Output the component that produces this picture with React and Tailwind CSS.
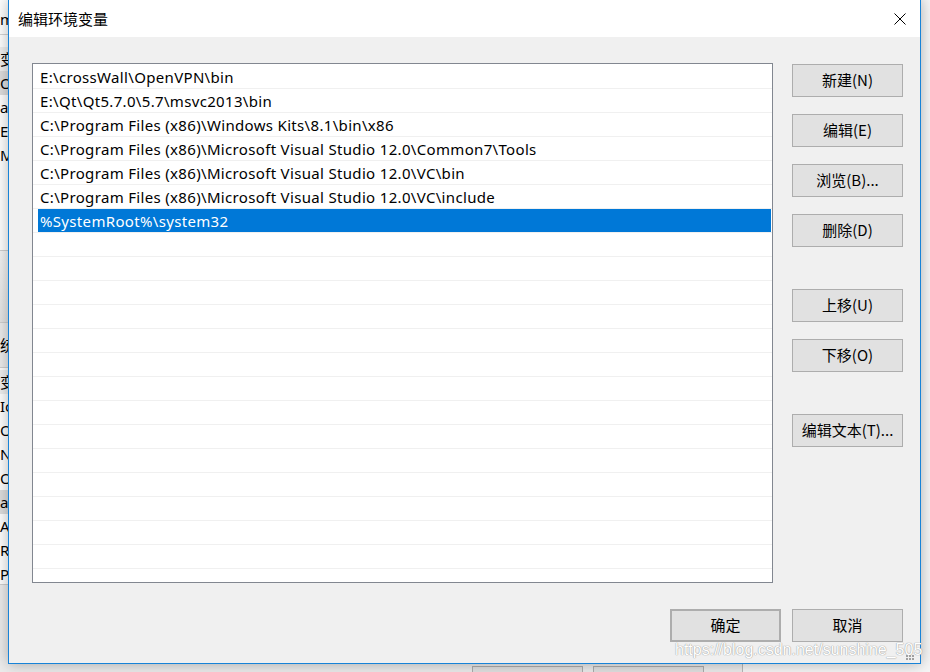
import React from "react";

const paths = [
  "E:\\crossWall\\OpenVPN\\bin",
  "E:\\Qt\\Qt5.7.0\\5.7\\msvc2013\\bin",
  "C:\\Program Files (x86)\\Windows Kits\\8.1\\bin\\x86",
  "C:\\Program Files (x86)\\Microsoft Visual Studio 12.0\\Common7\\Tools",
  "C:\\Program Files (x86)\\Microsoft Visual Studio 12.0\\VC\\bin",
  "C:\\Program Files (x86)\\Microsoft Visual Studio 12.0\\VC\\include",
  "%SystemRoot%\\system32",
];

function Btn({ children, className = "" }) {
  return (
    <div
      className={
        "w-[111px] h-[33px] flex items-center justify-center border border-[#adadad] bg-[#e1e1e1] text-[15px] text-black " +
        className
      }
    >
      {children}
    </div>
  );
}

function Frag({ t, bg = "" }) {
  return (
    <div className={"h-[24px] flex items-center text-[15px] leading-none pl-[0px] text-black overflow-hidden whitespace-nowrap " + bg}>
      {t}
    </div>
  );
}

export default function App() {
  const rows = [];
  for (let i = 0; i < 22; i++) rows.push(paths[i] || "");
  return (
    <div className="relative w-[930px] h-[672px] overflow-hidden bg-[#f6f6f6] font-['Noto_Sans','Noto_Sans_CJK_SC',sans-serif]">
      {/* background window */}
      <div className="absolute left-0 top-0 w-[743px] h-[672px] bg-[#f0f0f0] border-r border-[#b9b9b9] flex flex-col">
        <div className="h-[35px] bg-white border-b border-[#d5d5d5] flex items-center text-[15px] pt-[4px] whitespace-nowrap">
          m
        </div>
        <div className="bg-white pt-[12px] h-[215px]">
          <Frag t="变" bg="bg-[#f0f0f0]" />
          <Frag t="Or" bg="bg-[#dedede]" />
          <Frag t="a" />
          <Frag t="E" />
          <Frag t="M" />
        </div>
        <div className="h-[72px] border-t border-[#cfcfcf] bg-gradient-to-b from-[#f4f4f4] to-[#e4e4e4]"></div>
        <div className="h-[46px] border-t border-b border-[#cfcfcf] bg-[#ececec] flex items-center text-[15px]">统</div>
        <div className="bg-white pt-[2px] h-[217px] border-b border-[#cfcfcf]">
          <Frag t="变" bg="bg-[#f0f0f0]" />
          <Frag t="Ic" />
          <Frag t="Or" />
          <Frag t="NU" />
          <Frag t="OS" />
          <Frag t="a" bg="bg-[#dedede]" />
          <Frag t="A" />
          <Frag t="R" />
          <Frag t="P" />
        </div>
        <div className="flex-1 bg-[#ececec] relative">
          <div className="absolute left-[472px] top-[81px] w-[111px] h-[20px] border border-[#adadad] bg-[#e1e1e1]"></div>
          <div className="absolute left-[593px] top-[81px] w-[111px] h-[20px] border border-[#adadad] bg-[#e1e1e1]"></div>
        </div>
      </div>

      {/* dialog window */}
      <div className="absolute left-[8px] top-[-1px] w-[913px] h-[665px] border border-[#1883d7] bg-[#f0f0f0] shadow-[0_0_14px_rgba(0,0,0,0.3)] flex flex-col">
        <div className="h-[37px] bg-white flex items-center justify-between pl-[9px] pr-[14px] shrink-0">
          <span className="text-[15px] text-black font-['Noto_Sans_CJK_SC',sans-serif] pt-[2px]">编辑环境变量</span>
          <svg width="12" height="12" viewBox="0 0 12 12" className="mt-[1px]">
            <path d="M0.5 0.5 L11.5 11.5 M11.5 0.5 L0.5 11.5" stroke="#000" strokeWidth="1" fill="none" />
          </svg>
        </div>
        <div className="flex pl-[23px] pt-[26px]">
          <div className="w-[741px] h-[520px] border border-[#828790] bg-white overflow-hidden pt-[1px]">
            {rows.map((p, i) => (
              <div key={i} className="h-[24px] border-b border-[#f0f0f0] flex items-stretch">
                {i === 6 ? (
                  <div className="ml-[5px] mr-[1px] flex-1 bg-[#0078d7] text-white text-[15px] tracking-[0.33px] flex items-center pl-[2px] pt-[2px] whitespace-nowrap">
                    {p}
                  </div>
                ) : (
                  <div className="pl-[7px] pt-[2px] text-black text-[15px] tracking-[0.33px] flex items-center whitespace-nowrap">{p}</div>
                )}
              </div>
            ))}
          </div>
          <div className="ml-[19px] flex flex-col font-['Noto_Sans_CJK_SC',sans-serif]">
            <Btn className="mt-[1px]">新建(N)</Btn>
            <Btn className="mt-[17px]">编辑(E)</Btn>
            <Btn className="mt-[17px]">浏览(B)...</Btn>
            <Btn className="mt-[17px]">删除(D)</Btn>
            <Btn className="mt-[42px]">上移(U)</Btn>
            <Btn className="mt-[17px]">下移(O)</Btn>
            <Btn className="mt-[42px]">编辑文本(T)...</Btn>
          </div>
        </div>
        <div className="flex justify-end gap-[11px] pr-[17px] mt-[26px] font-['Noto_Sans_CJK_SC',sans-serif]">
          <Btn className="border-2 border-[#0078d7]">确定</Btn>
          <Btn>取消</Btn>
        </div>
      </div>

      {/* watermark */}
      <div className="absolute left-[675px] top-[642px] text-[16px] leading-none text-white font-['Liberation_Sans',sans-serif] [text-shadow:0_0_1px_#9a9a9a,0_0_1px_#9a9a9a] whitespace-nowrap">
        https://blog.csdn.net/sunshine_505
      </div>
      <div className="absolute left-[906px] top-[655px] grid grid-cols-3 gap-[1px]">
        {[0, 1, 2, 3, 4, 5].map((k) => (
          <div key={k} className="w-[2px] h-[2px] bg-[#a0a0a0]"></div>
        ))}
      </div>
    </div>
  );
}
